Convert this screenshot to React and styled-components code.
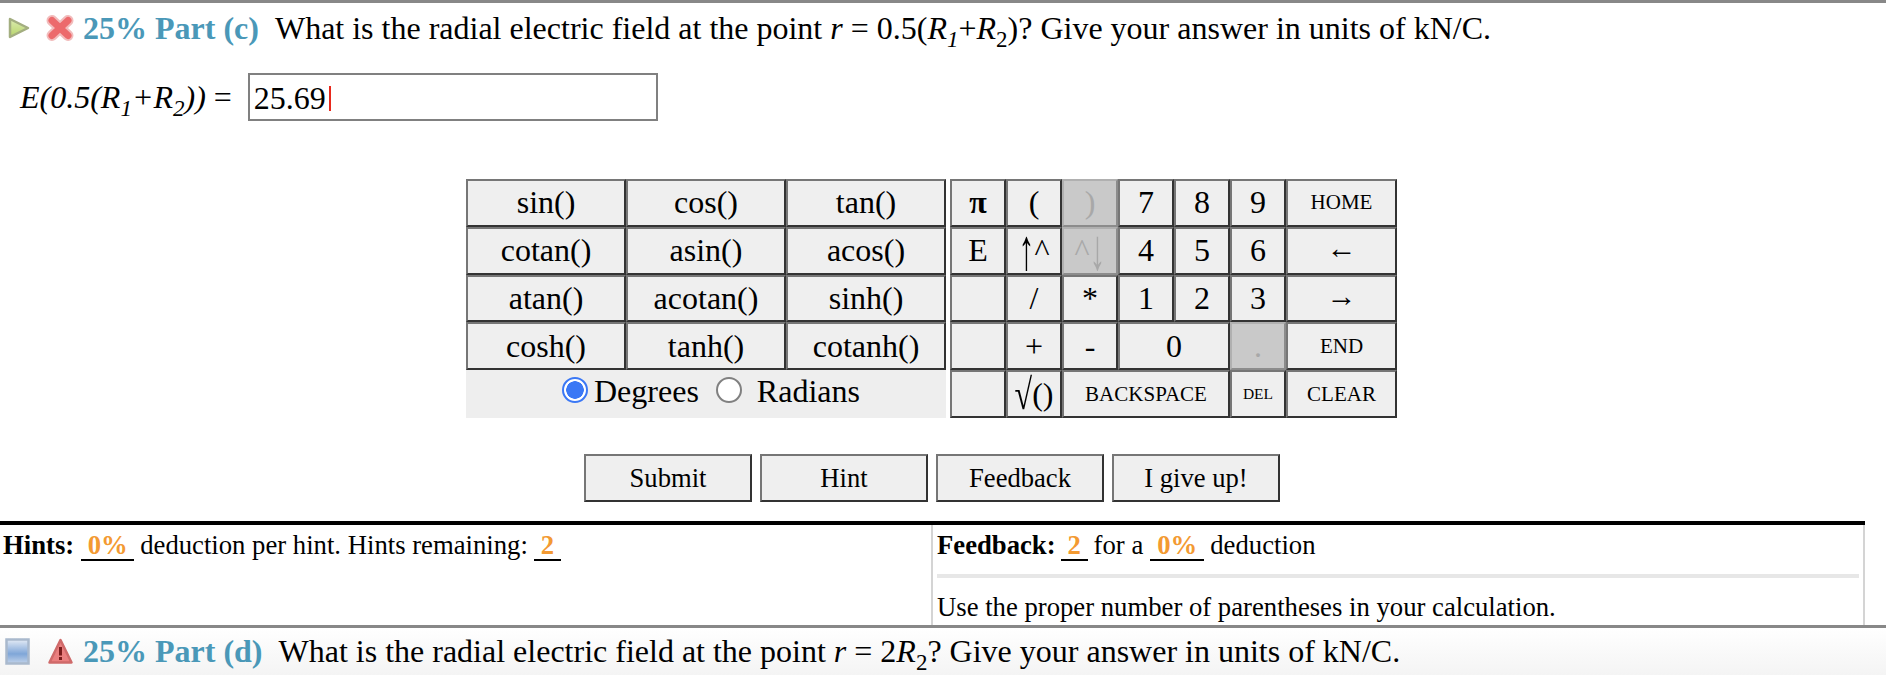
import React from 'react';
import styled, { createGlobalStyle } from 'styled-components';

const GlobalStyle = createGlobalStyle`
  html, body {
    margin: 0;
    padding: 0;
    background: #fff;
  }
  body {
    font-family: "Liberation Serif", "Times New Roman", serif;
    color: #000;
    overflow: hidden;
  }
`;

const Page = styled.div`
  width: 1886px;
  height: 676px;
  overflow: hidden;
  display: flex;
  flex-direction: column;
`;

const PartHeader = styled.div`
  display: flex;
  align-items: center;
  height: ${(p) => p.$height}px;
  flex: none;
  border-top: 3px solid #888;
  background: ${(p) => (p.$shaded ? 'linear-gradient(#fff, #f4f4f4)' : '#fff')};
  font-size: 32px;
  white-space: pre;
`;

const IconSlot = styled.span`
  display: flex;
  align-items: center;
  justify-content: center;
  flex: none;
  width: ${(p) => p.$width}px;
  margin-left: ${(p) => p.$left}px;
`;

const PartLabel = styled.b`
  color: #4a98b8;
  margin-left: 8px;
  margin-right: 16px;
`;

const Formula = styled.div`
  display: flex;
  align-items: center;
  margin-top: 20px;
  padding-left: 20px;
  font-size: 32px;
  height: 48px;
  flex: none;
`;

const Lhs = styled.i`
  white-space: pre;
`;

const Equals = styled.span`
  margin-left: 8px;
  width: 34px;
`;

const Sub = styled.sub`
  font-size: 23px;
  line-height: 0;
  vertical-align: -8px;
`;

const AnswerBox = styled.div`
  box-sizing: border-box;
  width: 410px;
  height: 48px;
  border: 2px solid #808080;
  display: flex;
  align-items: center;
  padding: 3px 0 0 4px;
`;

const Caret = styled.span`
  display: inline-block;
  width: 2px;
  height: 25px;
  margin-left: 3px;
  background: #e8291c;
`;

const Keypad = styled.div`
  display: flex;
  margin: 58px 0 0 466px;
  gap: 4px;
  flex: none;
`;

const LeftPad = styled.div`
  width: 480px;
  display: flex;
  flex-direction: column;
  background: #eee;
`;

const FunctionGrid = styled.div`
  display: grid;
  grid-template-columns: repeat(3, 160px);
  grid-auto-rows: 47.8px;
`;

const NumberGrid = styled.div`
  display: grid;
  grid-template-columns: repeat(6, 56px) 111px;
  grid-auto-rows: 47.8px;
`;

const Key = styled.button`
  box-sizing: border-box;
  margin: 0;
  padding: 0 0 ${(p) => p.$lift || 0}px;
  font-family: inherit;
  font-size: ${(p) => p.$size || 32}px;
  font-weight: ${(p) => (p.$heavy ? 700 : 400)};
  color: ${(p) => (p.disabled ? '#a8a8a8' : '#000')};
  background: ${(p) => (p.disabled ? '#c9c9c9' : '#efefef')};
  border: 2px solid;
  border-color: ${(p) =>
    p.disabled ? '#b0b0b0 #8c8c8c #8c8c8c #b0b0b0' : '#767676 #333 #333 #767676'};
  grid-column: span ${(p) => p.$span || 1};
  white-space: pre;
`;

const Tall = styled.span`
  display: inline-block;
  transform: scaleY(${(p) => p.$scale});
`;

const AngleRow = styled.div`
  flex: 1;
  display: flex;
  align-items: center;
  padding: 0 0 8px 96px;
  font-size: 32px;
`;

const Radio = styled.input`
  appearance: none;
  box-sizing: border-box;
  flex: none;
  width: 26px;
  height: 26px;
  margin: 0;
  border-radius: 50%;
  background: #fff;
  border: 2px solid #808080;
  &:checked {
    border-color: #3b78f5;
    background: radial-gradient(circle, #3b78f5 0 8.5px, #fff 9px);
  }
`;

const RadioText = styled.label`
  padding-top: 3px;
  margin-left: ${(p) => p.$gap}px;
  margin-right: ${(p) => p.$after}px;
`;

const ActionRow = styled.div`
  display: flex;
  gap: 8px;
  margin: 36px 0 0 584px;
  flex: none;
`;

const ActionButton = styled.button`
  box-sizing: border-box;
  width: 168px;
  height: 48px;
  margin: 0;
  padding: 0;
  font-family: inherit;
  font-size: 26.6px;
  color: #000;
  background: #efefef;
  border: 2px solid;
  border-color: #767676 #333 #333 #767676;
`;

const Panels = styled.div`
  display: flex;
  width: 1865px;
  height: 104px;
  margin-top: 19px;
  flex: none;
  border-top: 4px solid #000;
  box-sizing: border-box;
  font-size: 26.7px;
  overflow: hidden;
`;

const HintPanel = styled.div`
  width: 931px;
  flex: none;
  padding: 4px 0 0 3px;
  box-sizing: border-box;
`;

const FeedbackPanel = styled.div`
  flex: 1;
  border-left: 2px solid #d4d4d4;
  border-right: 2px solid #d4d4d4;
  padding: 4px 4px 0;
`;

const StatLine = styled.div`
  display: flex;
  white-space: pre;
  height: 32px;
  line-height: 32px;
`;

const Fill = styled.b`
  display: block;
  height: 30px;
  color: #f39a32;
  text-align: center;
  border-bottom: 2px solid #000;
  width: ${(p) => p.$width}px;
  margin: 0 ${(p) => p.$right}px 0 ${(p) => p.$left}px;
`;

const Divider = styled.div`
  height: 4px;
  margin-top: 13px;
  background: #e7e7e7;
`;

const FeedbackText = styled.div`
  margin-top: 14px;
  line-height: 30px;
  white-space: pre;
`;

const Soften = () => (
  <filter id="soften" x="-50%" y="-50%" width="200%" height="200%">
    <feGaussianBlur stdDeviation="0.6" />
  </filter>
);

const PlayIcon = () => (
  <svg width="24" height="24" viewBox="0 0 24 24">
    <defs>
      <Soften />
      <linearGradient id="play" x1="0" y1="0" x2="0" y2="1">
        <stop offset="0" stopColor="#dcebb0" />
        <stop offset="1" stopColor="#b6d46a" />
      </linearGradient>
    </defs>
    <path d="M3 3 L21 12 L3 21 Z" fill="url(#play)" stroke="#a3ae80" strokeWidth="2.5" strokeLinejoin="round" filter="url(#soften)" />
  </svg>
);

const CrossIcon = () => (
  <svg width="30" height="28" viewBox="0 0 30 28">
    <g filter="url(#soften)" strokeLinecap="round">
      <path d="M7 6.5 L23 21.5 M23 6.5 L7 21.5" stroke="#f2bcbc" strokeWidth="11" />
      <path d="M7 6.5 L23 21.5 M23 6.5 L7 21.5" stroke="#ec6a6c" strokeWidth="7" />
    </g>
  </svg>
);

const BoxIcon = () => (
  <svg width="25" height="27" viewBox="0 0 25 27">
    <defs>
      <linearGradient id="box" x1="0" y1="0" x2="0" y2="1">
        <stop offset="0" stopColor="#e4ebf5" />
        <stop offset="0.6" stopColor="#7fa6d8" />
        <stop offset="1" stopColor="#c2d3ea" />
      </linearGradient>
    </defs>
    <rect x="1.5" y="1.5" width="22" height="24" fill="url(#box)" stroke="#a9b9cd" strokeWidth="2.5" filter="url(#soften)" />
  </svg>
);

const WarnIcon = () => (
  <svg width="25" height="27" viewBox="0 0 25 27">
    <g filter="url(#soften)">
      <path d="M12.5 2 L23.5 24.5 L1.5 24.5 Z" fill="#ea7f7f" stroke="#cf6a6a" strokeWidth="2.5" strokeLinejoin="round" />
      <path d="M12.5 9 V17.5" stroke="#7a1f1f" strokeWidth="3" />
      <rect x="11" y="19" width="3" height="3" fill="#7a1f1f" />
    </g>
  </svg>
);

const functionKeys = [
  'sin()', 'cos()', 'tan()',
  'cotan()', 'asin()', 'acos()',
  'atan()', 'acotan()', 'sinh()',
  'cosh()', 'tanh()', 'cotanh()',
];

const numberKeys = [
  { t: 'π', heavy: true }, { t: '(' }, { t: ')', off: true }, { t: '7' }, { t: '8' }, { t: '9' }, { t: 'HOME', size: 21 },
  { t: 'E' }, { t: <><Tall $scale={1.8}>↑</Tall>^</> }, { t: <>^<Tall $scale={1.8}>↓</Tall></>, off: true }, { t: '4' }, { t: '5' }, { t: '6' }, { t: '←', size: 30, lift: 6 },
  { t: '' }, { t: '/' }, { t: '*' }, { t: '1' }, { t: '2' }, { t: '3' }, { t: '→', size: 30, lift: 5 },
  { t: '' }, { t: '+' }, { t: '-' }, { t: '0', span: 2 }, { t: '.', off: true }, { t: 'END', size: 21 },
  { t: '' }, { t: <><Tall $scale={1.35}>√</Tall>()</> }, { t: 'BACKSPACE', span: 3, size: 21 }, { t: 'DEL', size: 15.5 }, { t: 'CLEAR', size: 21 },
];

const App = () => {
  return (
    <Page>
      <GlobalStyle />
      <PartHeader $height={50}>
        <IconSlot $left={7} $width={24}><PlayIcon /></IconSlot>
        <IconSlot $left={14} $width={30}><CrossIcon /></IconSlot>
        <PartLabel>25% Part (c)</PartLabel>
        <span>What is the radial electric field at the point <i>r</i> = 0.5(<i>R</i><Sub><i>1</i></Sub>+<i>R</i><Sub>2</Sub>)? Give your answer in units of kN/C.</span>
      </PartHeader>

      <Formula>
        <Lhs>E(0.5(R<Sub>1</Sub>+R<Sub>2</Sub>))</Lhs>
        <Equals>=</Equals>
        <AnswerBox>25.69<Caret /></AnswerBox>
      </Formula>

      <Keypad>
        <LeftPad>
          <FunctionGrid>
            {functionKeys.map((label) => (
              <Key key={label}>{label}</Key>
            ))}
          </FunctionGrid>
          <AngleRow>
            <Radio type="radio" name="angle" defaultChecked />
            <RadioText $gap={6} $after={17}>Degrees</RadioText>
            <Radio type="radio" name="angle" />
            <RadioText $gap={15} $after={0}>Radians</RadioText>
          </AngleRow>
        </LeftPad>
        <NumberGrid>
          {numberKeys.map((k, i) => (
            <Key key={i} disabled={k.off} $span={k.span} $size={k.size} $heavy={k.heavy} $lift={k.lift}>{k.t}</Key>
          ))}
        </NumberGrid>
      </Keypad>

      <ActionRow>
        <ActionButton>Submit</ActionButton>
        <ActionButton>Hint</ActionButton>
        <ActionButton>Feedback</ActionButton>
        <ActionButton>I give up!</ActionButton>
      </ActionRow>

      <Panels>
        <HintPanel>
          <StatLine>
            <b>Hints:</b>
            <Fill $left={7} $right={6} $width={53}>0%</Fill>
            deduction per hint. Hints remaining:
            <Fill $left={6} $right={0} $width={27}>2</Fill>
          </StatLine>
        </HintPanel>
        <FeedbackPanel>
          <StatLine>
            <b>Feedback:</b>
            <Fill $left={5} $right={6} $width={27}>2</Fill>
            for a
            <Fill $left={7} $right={6} $width={54}>0%</Fill>
            deduction
          </StatLine>
          <Divider />
          <FeedbackText>Use the proper number of parentheses in your calculation.</FeedbackText>
        </FeedbackPanel>
      </Panels>

      <PartHeader $height={47} $shaded>
        <IconSlot $left={5} $width={25}><BoxIcon /></IconSlot>
        <IconSlot $left={15} $width={30}><WarnIcon /></IconSlot>
        <PartLabel>25% Part (d)</PartLabel>
        <span>What is the radial electric field at the point <i>r</i> = 2<i>R</i><Sub>2</Sub>? Give your answer in units of kN/C.</span>
      </PartHeader>
    </Page>
  );
};

export default App;
